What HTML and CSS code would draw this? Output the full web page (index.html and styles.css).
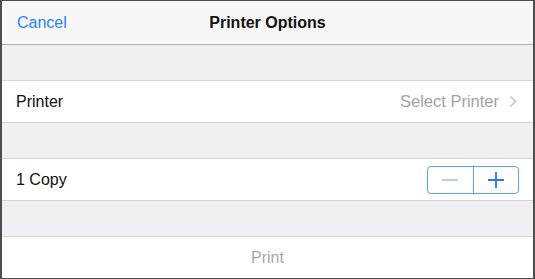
FILE: index.html
```html
<!DOCTYPE html>
<html>
<head>
<meta charset="utf-8">
<link rel="stylesheet" href="styles.css">
</head>
<body>
<div class="screen">
  <header class="navbar">
    <span class="nav-cancel">Cancel</span>
    <span class="nav-title">Printer Options</span>
    <span class="nav-spacer"></span>
  </header>
  <div class="gap"></div>
  <div class="row">
    <span class="label">Printer</span>
    <span class="detail">Select Printer
      <svg class="chevron" width="8" height="13" viewBox="0 0 8 13"><path d="M1.5 1.5 L6.5 6.5 L1.5 11.5" fill="none" stroke="#c7c7cc" stroke-width="1.6"/></svg>
    </span>
  </div>
  <div class="gap"></div>
  <div class="row">
    <span class="label">1 Copy</span>
    <div class="stepper">
      <span class="step step-minus"><svg width="18" height="18" viewBox="0 0 18 18"><path d="M1 9 H17" stroke="#8ec2f8" stroke-width="1.5"/></svg></span>
      <span class="step step-plus"><svg width="18" height="18" viewBox="0 0 18 18"><path d="M1 9 H17 M9 1 V17" stroke="#1a7cf5" stroke-width="1.8"/></svg></span>
    </div>
  </div>
  <div class="gap"></div>
  <div class="row row-center">
    <span class="print">Print</span>
  </div>
</div>
</body>
</html>
```
FILE: styles.css
```css
html, body {
  margin: 0;
  padding: 0;
  background: #4a4a4a;
}
body {
  font-family: "Liberation Sans", Arial, sans-serif;
}
.screen {
  box-sizing: border-box;
  width: 535px;
  height: 279px;
  border-style: solid;
  border-color: #4d4d4d;
  border-width: 1px 2px 1px 2px;
  background: #efeff4;
  display: flex;
  flex-direction: column;
  overflow: hidden;
}
.navbar {
  height: 43px;
  flex: none;
  background: #f7f7f7;
  border-bottom: 1px solid #b2b2b2;
  display: flex;
  align-items: center;
  justify-content: space-between;
  padding: 0 15px;
}
.nav-cancel {
  color: #2583f5;
  font-size: 16px;
  width: 100px;
}
.nav-title {
  font-weight: bold;
  font-size: 16px;
  color: #111;
}
.nav-spacer {
  width: 100px;
}
.gap {
  height: 35px;
  flex: none;
}
.row {
  height: 41px;
  flex: none;
  background: #fff;
  border-top: 1px solid #d3d3d8;
  border-bottom: 1px solid #d3d3d8;
  display: flex;
  align-items: center;
  justify-content: space-between;
  padding: 0 14px 0 14px;
}
.row-center {
  justify-content: center;
  border-bottom: none;
}
.label {
  font-size: 16px;
  color: #111;
}
.detail {
  font-size: 16.5px;
  color: #a3a3a3;
  display: flex;
  align-items: center;
  gap: 10px;
}
.chevron {
  margin-right: 2px;
}
.stepper {
  display: flex;
  width: 92px;
  height: 28px;
  box-sizing: border-box;
  border: 1px solid #5aa4f4;
  border-radius: 4px;
  margin-right: 0;
}
.step {
  flex: 1;
  display: flex;
  align-items: center;
  justify-content: center;
}
.step-minus {
  border-right: 1px solid #5aa4f4;
}
.print {
  font-size: 16px;
  color: #a8a8a8;
}
```
